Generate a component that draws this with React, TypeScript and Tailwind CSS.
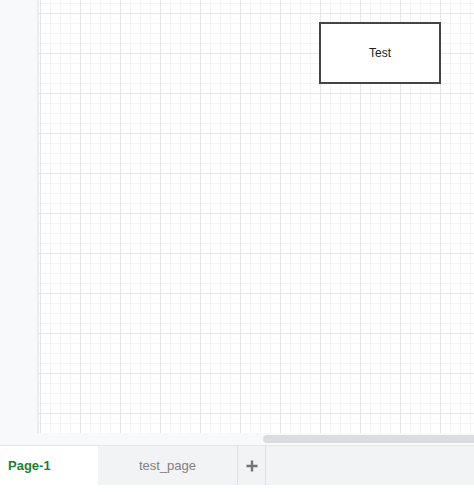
import React from "react";

const CANVAS_W = 435;
const CANVAS_H = 433;

// grid lines in canvas-local coords; the page grid is anchored at x=0 / y=13
const GridLines = () => {
    const xs: number[] = [];
    for (let x = 1; x < CANVAS_W; x += 10) xs.push(x);
    const ys: number[] = [];
    for (let y = 3; y < CANVAS_H; y += 10) ys.push(y);

    return (
        <svg width={CANVAS_W} height={CANVAS_H} className="absolute inset-0" shapeRendering="crispEdges">
            {xs.filter((x) => (x + 39) % 40 !== 0).map((x) => (
                <line key={"vx" + x} x1={x + 0.5} y1={0} x2={x + 0.5} y2={CANVAS_H} stroke="#f4f4f4" />
            ))}
            {ys.filter((y) => (y - 13) % 40 !== 0).map((y) => (
                <line key={"hy" + y} x1={0} y1={y + 0.5} x2={CANVAS_W} y2={y + 0.5} stroke="#f4f4f4" />
            ))}
            {xs.filter((x) => (x + 39) % 40 === 0).map((x) => (
                <line key={"mx" + x} x1={x + 0.5} y1={0} x2={x + 0.5} y2={CANVAS_H} stroke="#e6e6e6" />
            ))}
            {ys.filter((y) => (y - 13) % 40 === 0).map((y) => (
                <line key={"my" + y} x1={0} y1={y + 0.5} x2={CANVAS_W} y2={y + 0.5} stroke="#e6e6e6" />
            ))}
        </svg>
    );
};

const PageTab = ({ label, active, width }: { label: string; active?: boolean; width: string }) => (
    <div
        className={
            active
                ? `${width} h-full flex items-center pl-2 bg-white text-[13px] font-bold text-[#188038]`
                : `${width} h-full flex items-center justify-center border-r border-[#e0e0e0] text-[13px] text-[#808080]`
        }
    >
        {label}
    </div>
);

export default function App() {
    return (
        <div className="w-[474px] h-[492px] flex flex-col bg-white overflow-hidden font-['Liberation_Sans',Arial,sans-serif]">
            <div className="flex h-[433px]">
                <div className="w-[39px] h-full bg-[#f8f9fa] border-r-2 border-[#ececec]" />
                <div className="relative flex-1 h-full bg-white overflow-hidden">
                    <GridLines />
                    <div className="absolute left-[280px] top-[22px] w-[122px] h-[62px] bg-white border-2 border-[#444] flex items-center justify-center text-[12px] text-[#222]">
                        Test
                    </div>
                </div>
            </div>

            <div className="h-[13px] bg-[#f8f9fa] border-b border-[#e6e6e6] flex items-center">
                <div className="ml-[263px] flex-1 h-[8px] rounded-l-full bg-[#dadce0]" />
            </div>

            <div className="h-[39px] flex bg-[#f1f3f4]">
                <PageTab label="Page-1" active width="w-[98px]" />
                <PageTab label="test_page" width="w-[140px]" />
                <div className="w-[28px] h-full flex items-center justify-center border-r border-[#e0e0e0]">
                    <svg width="12" height="12" viewBox="0 0 12 12">
                        <path d="M6 0.5v11M0.5 6h11" stroke="#757575" strokeWidth="2.4" />
                    </svg>
                </div>
            </div>

            <div className="flex-1 bg-white" />
        </div>
    );
}
